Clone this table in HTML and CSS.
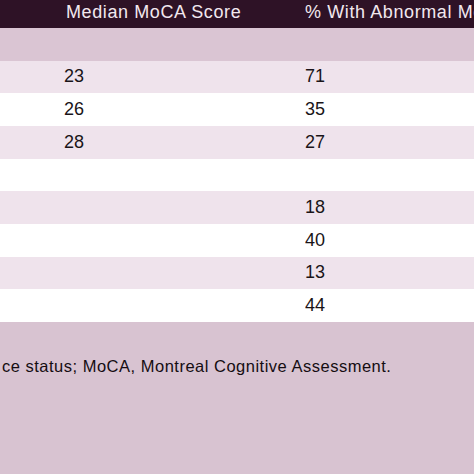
FILE: index.html
```html
<!DOCTYPE html>
<html>
<head>
<meta charset="utf-8">
<link rel="stylesheet" href="styles.css">
</head>
<body>
<div class="table">
  <div class="row head">
    <div class="cell"></div>
    <div class="cell">Median MoCA Score</div>
    <div class="cell">% With Abnormal MoCA</div>
  </div>
  <div class="row section"><div class="cell"></div><div class="cell"></div><div class="cell"></div></div>
  <div class="row shade"><div class="cell"></div><div class="cell">23</div><div class="cell">71</div></div>
  <div class="row plain"><div class="cell"></div><div class="cell">26</div><div class="cell">35</div></div>
  <div class="row shade"><div class="cell"></div><div class="cell">28</div><div class="cell">27</div></div>
  <div class="row plain"><div class="cell"></div><div class="cell"></div><div class="cell"></div></div>
  <div class="row shade"><div class="cell"></div><div class="cell"></div><div class="cell">18</div></div>
  <div class="row plain"><div class="cell"></div><div class="cell"></div><div class="cell">40</div></div>
  <div class="row shade"><div class="cell"></div><div class="cell"></div><div class="cell">13</div></div>
  <div class="row plain"><div class="cell"></div><div class="cell"></div><div class="cell">44</div></div>
</div>
<div class="footer">
  <p class="note">ce status; MoCA, Montreal Cognitive Assessment.</p>
</div>
</body>
</html>
```
FILE: styles.css
```css
html, body {
  margin: 0;
  padding: 0;
  width: 474px;
  height: 474px;
  overflow: hidden;
  background: #d8c3d1;
}
.table {
  display: flex;
  flex-direction: column;
  font-family: "Liberation Sans", Arial, sans-serif;
  color: #1a1418;
}
.row {
  display: grid;
  grid-template-columns: 64px 241px 1fr;
  height: 32.67px;
  align-items: center;
  font-size: 18px;
  white-space: nowrap;
  overflow: hidden;
}
.cell { overflow: hidden; }
.head {
  height: 28px;
  background: #2e1226;
  color: #f2e8ef;
  font-size: 18px;
  letter-spacing: 0.6px;
  align-items: start;
  line-height: 24px;
}
.head .cell:nth-child(2) { padding-left: 2px; }
.section { background: #dac5d3; }
.shade { background: #efe3ec; }
.plain { background: #ffffff; }
.footer {
  height: 152px;
  background: #d8c3d1;
  padding-top: 35px;
  box-sizing: border-box;
}
.note {
  margin: 0;
  padding-left: 2px;
  font-family: "Liberation Sans", Arial, sans-serif;
  font-size: 16.5px;
  letter-spacing: 0.5px;
  color: #150d12;
  white-space: nowrap;
}
```
